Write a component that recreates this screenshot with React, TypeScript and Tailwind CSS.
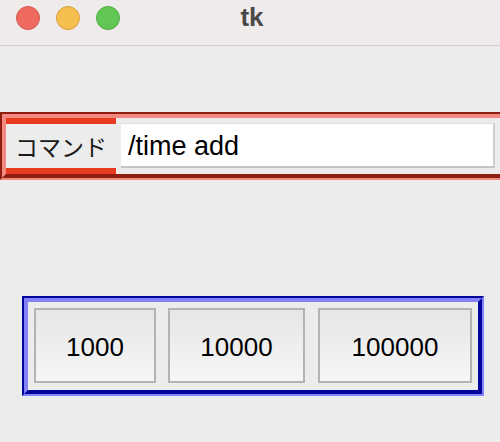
import React from "react";

const buttons = [
  { label: "1000", w: "w-[122px]" },
  { label: "10000", w: "w-[137px]" },
  { label: "100000", w: "w-[154px]" },
];

export default function App() {
  return (
    <div
      className="relative w-[500px] h-[442px] overflow-hidden bg-[#ececec]"
      style={{ fontFamily: '"Liberation Sans", "Noto Sans CJK JP", sans-serif' }}
    >
      {/* title bar */}
      <div className="relative h-[46px] bg-[#efebeb] border-b border-[#d3d0d0] flex items-center">
        <div className="flex gap-4 pl-4 pt-[1px] -mt-[10px]">
          <div className="w-[24px] h-[24px] rounded-full bg-[#ee6a5f] border border-[#d4574c]" />
          <div className="w-[24px] h-[24px] rounded-full bg-[#f5be4f] border border-[#d9a23c]" />
          <div className="w-[24px] h-[24px] rounded-full bg-[#62c654] border border-[#4eab41]" />
        </div>
        <div className="absolute left-0 right-0 top-[1px] text-center text-[26px] leading-[32px] font-bold text-[#4a4848] pl-[4px]">
          tk
        </div>
      </div>

      {/* red frame */}
      <div className="mt-[66px] w-[520px] h-[68px] border-t-2 border-l-2 border-t-[#8f1d11] border-l-[#8f1d11] border-b-2 border-r-2 border-b-[#f28a81] border-r-[#f28a81]">
        <div className="h-full border-t-4 border-l-4 border-t-[#f28a81] border-l-[#f28a81] border-b-4 border-r-4 border-b-[#8f1d11] border-r-[#8f1d11] flex">
          <div
            className="w-[110px] h-[56px] border-y-[6px] border-[#e83b1f] bg-[#ececec] flex items-center justify-center text-[23px] text-[#1a1a1a] pt-[1px]"
            style={{ fontFamily: '"Noto Sans CJK JP", sans-serif' }}
          >
            コマンド
          </div>
          <div className="ml-[5px] mt-[5px] w-[374px] h-[45px] bg-white border-t border-t-[#dcdcdc] border-r-2 border-r-[#cfcfcf] border-b-2 border-b-[#c4c4c4] flex items-center pl-[7px] pt-[2px] text-[27px] text-black">
            /time add
          </div>
        </div>
      </div>

      {/* blue frame */}
      <div className="mt-[116px] ml-[22px] w-[462px] h-[100px] border-t-2 border-l-2 border-t-[#02029c] border-l-[#02029c] border-b-2 border-r-2 border-b-[#8383f7] border-r-[#8383f7]">
        <div className="h-full border-t-4 border-l-4 border-t-[#8383f7] border-l-[#8383f7] border-b-4 border-r-4 border-b-[#02029c] border-r-[#02029c] bg-[#ececec] p-[6px] flex gap-[12px]">
          {buttons.map((b, i) => (
            <div
              key={b.label}
              className={`${b.w} h-[75px] border-2 border-[#b3b3b3] bg-gradient-to-b from-[#e6e6e6] to-[#f6f6f6] flex items-center justify-center pt-[4px] text-[26px] text-black ${i === 2 ? "ml-[1px]" : ""}`}
            >
              {b.label}
            </div>
          ))}
        </div>
      </div>
    </div>
  );
}
